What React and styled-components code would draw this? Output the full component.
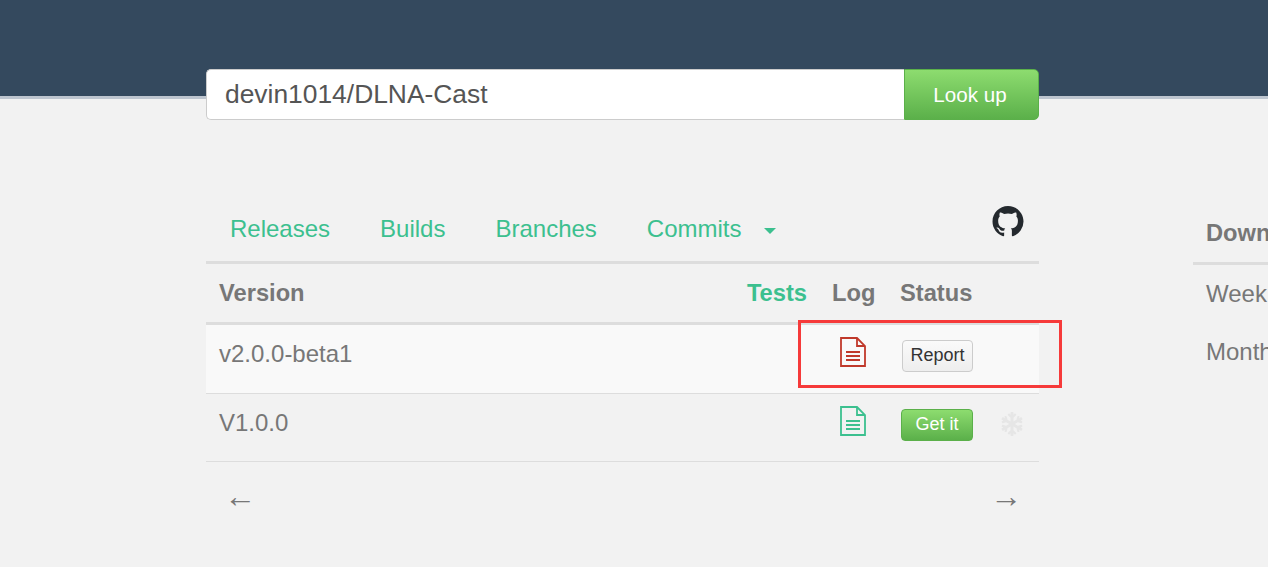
import styled, { createGlobalStyle } from "styled-components"
import { FaSnowflake } from "react-icons/fa"

const GlobalStyle = createGlobalStyle`
    html, body {
        margin: 0;
        height: 100%;
        overflow: hidden;
        background: #f2f2f2;
        font-family: "Liberation Sans", Arial, sans-serif;
        color: #777;
    }
`

const Page = styled.div`
    position: relative;
    width: 1268px;
    height: 567px;
    overflow: hidden;
`

const TopBar = styled.header`
    height: 96px;
    background: #34495e;
    border-bottom: 3px solid #bdc5cf;
`

const Content = styled.main`
    display: flex;
    gap: 154px;
    padding-left: 206px;
    margin-top: -30px;
`

const MainColumn = styled.section`
    flex: 0 0 833px;
`

const SearchForm = styled.form`
    display: flex;
    height: 51px;
    margin-bottom: 76px;
`

const SearchInput = styled.input`
    flex: 1;
    min-width: 0;
    box-sizing: border-box;
    padding: 0 18px;
    border: 1px solid #ccc;
    border-right: none;
    border-radius: 5px 0 0 5px;
    background: #fff;
    color: #555;
    font: 26.4px "Liberation Sans", Arial, sans-serif;
    outline: none;
`

const LookupButton = styled.button`
    width: 135px;
    padding: 0 3px 0 0;
    border: 1px solid #5bb04a;
    border-radius: 0 5px 5px 0;
    background: linear-gradient(#8ddc6f, #5bb04a);
    color: #fff;
    font: 20.6px "Liberation Sans", Arial, sans-serif;
`

const Tabs = styled.nav`
    display: flex;
    align-items: center;
    gap: 50px;
    height: 65px;
    padding: 0 15px 0 24px;
    border-bottom: 3px solid #ddd;
`

const Tab = styled.a`
    color: #3cc08f;
    font-size: 24px;
`

const Caret = styled.span`
    width: 0;
    height: 0;
    margin-left: -28px;
    margin-top: 4px;
    border-left: 6px solid transparent;
    border-right: 6px solid transparent;
    border-top: 6px solid #3cc08f;
`

const GithubLink = styled.a`
    display: flex;
    margin-left: auto;
    margin-top: -14px;
`

const Row = styled.div`
    display: grid;
    grid-template-columns: 1fr 80px 68px 100px 52px;
    align-items: center;
    height: ${p => p.$height}px;
    padding-bottom: ${p => p.$lift || 0}px;
    box-sizing: border-box;
    background: ${p => (p.$highlight ? "#f9f9f9" : "transparent")};
    border-bottom: ${p => p.$rule}px solid #ddd;
    font-size: 24px;
`

const VersionCell = styled.div`
    padding-left: 13px;
`

const HeadCell = styled.div`
    padding-left: ${p => p.$inset || 0}px;
    color: ${p => (p.$accent ? "#3cc08f" : "#777")};
    font-size: 23.7px;
    font-weight: bold;
`

const TestsCell = styled(HeadCell)`
    justify-self: end;
    margin-right: 12px;
`

const LogCell = styled.div`
    display: flex;
    justify-content: center;
    margin-bottom: 3px;
`

const SmallButton = styled.button`
    box-sizing: border-box;
    width: ${p => (p.$primary ? 72 : 71)}px;
    height: 32px;
    padding: 0;
    border-radius: 4px;
    font: 18px "Liberation Sans", Arial, sans-serif;
    color: ${p => (p.$primary ? "#fff" : "#333")};
    border: 1px solid ${p => (p.$primary ? "#5bb04a" : "#ccc")};
    background: ${p => (p.$primary
        ? "linear-gradient(#8ddc6f, #5bb04a)"
        : "linear-gradient(#fafafa, #eee)")};
`

const ButtonCell = styled.div`
    display: flex;
    padding-left: ${p => (p.$wide ? 14 : 15)}px;
    padding-top: 4px;
`

const FreezeCell = styled.div`
    display: flex;
    padding-left: 13px;
    padding-top: 2px;
    color: #e6e6e6;
    font-size: 24px;
`

const Pager = styled.div`
    display: flex;
    justify-content: space-between;
    padding: 14px 17px 13px 18px;
    color: #777;
    font-size: 32px;
    line-height: 40px;
`

const SidePanel = styled.aside`
    flex: 0 0 300px;
    margin-top: 127px;
`

const SideHead = styled.div`
    display: flex;
    align-items: center;
    height: 69px;
    padding-left: 13px;
    padding-top: 8px;
    box-sizing: border-box;
    border-bottom: 3px solid #ddd;
    font-size: 23.7px;
    font-weight: bold;
`

const SideRow = styled.div`
    display: flex;
    align-items: center;
    height: 58px;
    padding-left: 13px;
    font-size: 24px;
`

const Annotation = styled.div`
    position: absolute;
    left: 798px;
    top: 320px;
    width: 264px;
    height: 68px;
    box-sizing: border-box;
    border: 3px solid #f63a3a;
    pointer-events: none;
`

function FileIcon({ color }) {
    return (
        <svg width="26" height="30" viewBox="0 0 26 30" fill="none" stroke={color} strokeWidth="1.8">
            <path d="M1 1h16l8 8v20H1z" />
            <path d="M17 1v8h8" />
            <path d="M6 15h14M6 19h14M6 23h14" />
        </svg>
    )
}

function GithubIcon() {
    return (
        <svg width="32" height="31" viewBox="0 0 16 16" fill="#24292e">
            <path d="M8 0C3.58 0 0 3.58 0 8c0 3.54 2.29 6.53 5.47 7.59.4.07.55-.17.55-.38 0-.19-.01-.82-.01-1.49-2.01.37-2.53-.49-2.69-.94-.09-.23-.48-.94-.82-1.13-.28-.15-.68-.52-.01-.53.63-.01 1.08.58 1.23.82.72 1.21 1.87.87 2.33.66.07-.52.28-.87.51-1.07-1.78-.2-3.64-.89-3.64-3.95 0-.87.31-1.59.82-2.15-.08-.2-.36-1.02.08-2.12 0 0 .67-.21 2.2.82.64-.18 1.32-.27 2-.27s1.36.09 2 .27c1.53-1.04 2.2-.82 2.2-.82.44 1.1.16 1.92.08 2.12.51.56.82 1.27.82 2.15 0 3.07-1.87 3.75-3.65 3.95.29.25.54.73.54 1.48 0 1.07-.01 1.93-.01 2.2 0 .21.15.46.55.38A8.01 8.01 0 0 0 16 8c0-4.42-3.58-8-8-8z" />
        </svg>
    )
}

export default function App() {
    return (
        <Page>
            <GlobalStyle />
            <TopBar />
            <Content>
                <MainColumn>
                    <SearchForm onSubmit={e => e.preventDefault()}>
                        <SearchInput defaultValue="devin1014/DLNA-Cast" />
                        <LookupButton>Look up</LookupButton>
                    </SearchForm>
                    <Tabs>
                        <Tab>Releases</Tab>
                        <Tab>Builds</Tab>
                        <Tab>Branches</Tab>
                        <Tab>Commits</Tab>
                        <Caret />
                        <GithubLink><GithubIcon /></GithubLink>
                    </Tabs>
                    <Row $height={61} $rule={3}>
                        <HeadCell $inset={13}>Version</HeadCell>
                        <TestsCell $accent>Tests</TestsCell>
                        <HeadCell $inset={13}>Log</HeadCell>
                        <HeadCell $inset={13}>Status</HeadCell>
                    </Row>
                    <Row $height={69} $rule={1} $lift={11} $highlight>
                        <VersionCell>v2.0.0-beta1</VersionCell>
                        <div />
                        <LogCell><FileIcon color="#c0392b" /></LogCell>
                        <ButtonCell><SmallButton>Report</SmallButton></ButtonCell>
                    </Row>
                    <Row $height={68} $rule={1} $lift={10}>
                        <VersionCell>V1.0.0</VersionCell>
                        <div />
                        <LogCell><FileIcon color="#3cc08f" /></LogCell>
                        <ButtonCell $wide><SmallButton $primary>Get it</SmallButton></ButtonCell>
                        <FreezeCell><FaSnowflake /></FreezeCell>
                    </Row>
                    <Pager>
                        <span>←</span>
                        <span>→</span>
                    </Pager>
                </MainColumn>
                <SidePanel>
                    <SideHead>Downloads</SideHead>
                    <SideRow>Week</SideRow>
                    <SideRow>Month</SideRow>
                </SidePanel>
            </Content>
            <Annotation />
        </Page>
    )
}
